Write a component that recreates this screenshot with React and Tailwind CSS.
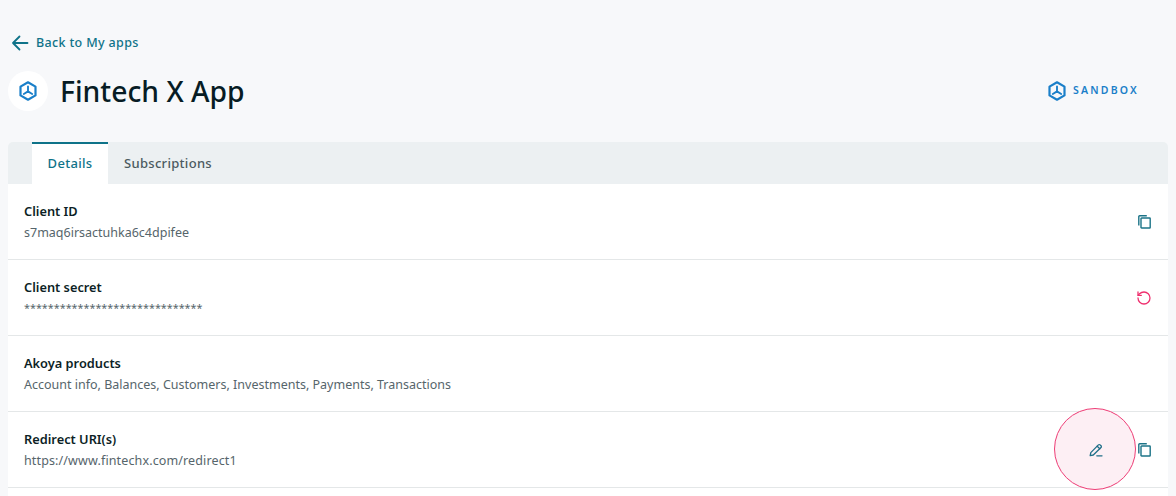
import React from "react";
import { RotateCcw } from "lucide-react";

const Hex = ({ size = 20, color = "#1a7fc9", sw = 2.2 }) => (
  <svg width={size} height={size} viewBox="0 0 20 20" fill="none" stroke={color} strokeWidth={sw} strokeLinejoin="round">
    <path d="M10 1.3 17.5 5.6V14.4L10 18.7 2.5 14.4V5.6Z" />
    <path d="M10 5.5V10.4M10 10.4 5.8 13M10 10.4 14.2 13" strokeWidth={sw * 0.85} strokeLinecap="round" />
  </svg>
);

const CopyIcon = () => (
  <svg width="14" height="14" viewBox="0 0 14 14" fill="none" className="shrink-0">
    <path d="M.8 10.4V1.6a.8.8 0 0 1 .8-.8h7.2" stroke="#1c7488" strokeWidth="1.4" />
    <rect x="3" y="3" width="9.2" height="10" rx="0.6" stroke="#1c7488" strokeWidth="1.4" />
  </svg>
);

const PenIcon = () => (
  <svg width="14" height="14" viewBox="0 0 14 14" fill="none" stroke="#1f6f88" strokeWidth="1.3" strokeLinejoin="round" strokeLinecap="round">
    <path d="M1.2 12.6 1.8 9.6 9.4 1.9a1.2 1.2 0 0 1 1.7 0l.9.9a1.2 1.2 0 0 1 0 1.7L4.3 12Z" />
    <path d="M8.2 3.2 10.8 5.8" />
    <path d="M7.8 12.8H13" />
  </svg>
);

const Row = ({ title, value, valueClass, children }) => (
  <div className="h-[76px] flex items-center justify-between border-b border-[#e4e7e8] pl-4 pr-4 bg-white">
    <div className="flex flex-col h-full pt-[17px]">
      <div className="text-[12.8px] leading-[20px] font-semibold text-[#0d1f26]">{title}</div>
      <div className={valueClass}>{value}</div>
    </div>
    <div className="flex items-center gap-6">{children}</div>
  </div>
);

export default function App() {
  return (
    <div className="w-[1176px] h-[496px] overflow-hidden bg-[#f7f8fa] px-2 relative" style={{ fontFamily: '"Noto Sans", sans-serif' }}>
      <div className="flex items-center h-5 mt-[33px] gap-[7px] pl-[3px]">
        <svg width="18" height="18" viewBox="0 0 18 18" fill="none" stroke="#0f7389" strokeWidth="1.8" strokeLinecap="round" strokeLinejoin="round">
          <path d="M16.5 9H2M8.5 2.5 2 9l6.5 6.5" />
        </svg>
        <span className="text-[12.5px] tracking-[0.35px] font-medium text-[#0f7389]">Back to My apps</span>
      </div>
      <div className="flex items-center justify-between mt-[18px] h-10 pr-[29px]">
        <div className="flex items-center gap-3">
          <div className="w-10 h-10 rounded-full bg-white flex items-center justify-center">
            <Hex size={20} />
          </div>
          <h1 className="text-[28.3px] leading-10 font-medium text-[#071c24]">Fintech X App</h1>
        </div>
        <div className="flex items-center gap-[6px]">
          <Hex size={20} />
          <span className="text-[10.5px] font-semibold tracking-[2.2px] text-[#1a7fc9]">SANDBOX</span>
        </div>
      </div>
      <div className="mt-[31px] rounded-t-[5px] overflow-hidden">
        <div className="h-[42px] bg-[#ecf0f2] flex pl-6">
          <div className="w-[76px] bg-white border-t-2 border-[#0f7389] flex items-center justify-center text-[13px] font-medium tracking-[0.3px] text-[#0f7389]">Details</div>
          <div className="w-[120px] border-t-2 border-transparent flex items-center justify-center text-[13px] font-medium tracking-[0.3px] text-[#4b5a60]">Subscriptions</div>
        </div>
        <Row title="Client ID" value="s7maq6irsactuhka6c4dpifee" valueClass="text-[12.5px] leading-[20px] text-[#56656b] mt-[2px]"><CopyIcon /></Row>
        <Row title="Client secret" value="******************************" valueClass="text-[10.8px] leading-[20px] text-[#56656b] mt-[1px]">
          <RotateCcw size={16} color="#ef2f6e" strokeWidth={1.9} />
        </Row>
        <Row title="Akoya products" value="Account info, Balances, Customers, Investments, Payments, Transactions" valueClass="text-[12.5px] leading-[20px] text-[#56656b] mt-[2px]" />
        <Row title="Redirect URI(s)" value="https://www.fintechx.com/redirect1" valueClass="text-[12.5px] leading-[20px] tracking-[0.13px] text-[#56656b] mt-[2px]">
          <PenIcon />
          <CopyIcon />
        </Row>
        <div className="h-4 bg-white" />
      </div>
      <div className="absolute left-[1054px] top-[408px] w-[82px] h-[82px] rounded-full border border-[#ee3d76] bg-[#fdeff4] flex items-center justify-center pl-[2px] pt-[2px]">
        <PenIcon />
      </div>
    </div>
  );
}
